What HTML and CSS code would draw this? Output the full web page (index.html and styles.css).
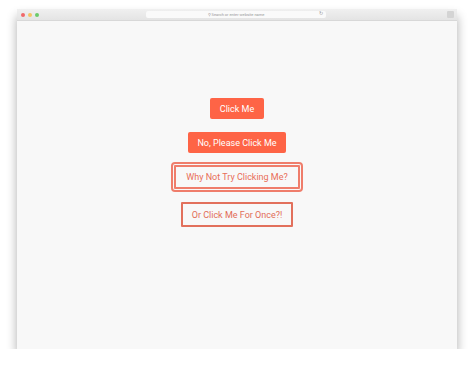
FILE: index.html
```html
<!DOCTYPE html>
<html lang="en">
<head>
  <meta charset="UTF-8" />
  <meta name="viewport" content="width=device-width, initial-scale=1.0" />
  <title>Button Styles</title>
  <link rel="stylesheet" href="styles.css">
</head>
<body>
  <div class="window">
    <!-- Browser chrome -->
    <div class="toolbar">
      <div class="lights">
        <span class="light red"></span>
        <span class="light yellow"></span>
        <span class="light green"></span>
      </div>
      <div class="address">
        <span class="search">&#9906; Search or enter website name</span>
        <span class="reload">&#8635;</span>
      </div>
      <div class="tab-btn"></div>
    </div>

    <div class="content">
      <button class="btn btn-solid">Click Me</button>
      <button class="btn btn-solid">No, Please Click Me</button>
      <button class="btn btn-double">Why Not Try Clicking Me?</button>
      <button class="btn btn-outline">Or Click Me For Once?!</button>
    </div>
  </div>
</body>
</html>
```

FILE: styles.css
```css
:root {
  --accent-color: #fe6446;
}

body {
  margin: 0;
  padding: 0;
  background-color: #fff;
  font-family: 'Roboto', sans-serif;
}

.window {
  width: 440px;
  margin: 9px 0 0 17px;
  box-shadow: 0 7px 10px rgba(0, 0, 0, 0.32);
}

.toolbar {
  height: 11px;
  background: linear-gradient(#f0f0f0, #e4e4e4);
  border-bottom: 1px solid #d8d8d8;
  display: flex;
  align-items: center;
  position: relative;
}

.lights {
  display: flex;
  gap: 3px;
  margin-left: 4px;
}

.light {
  width: 4px;
  height: 4px;
  border-radius: 50%;
}

.red { background: #f0686a; }
.yellow { background: #f5c563; }
.green { background: #6ccb6b; }

.address {
  width: 180px;
  height: 7px;
  margin-left: 107px;
  background: #fafafa;
  border-radius: 2px;
  display: flex;
  align-items: center;
  justify-content: center;
  position: relative;
}

.search {
  font-size: 4px;
  color: #999;
}

.reload {
  position: absolute;
  right: 3px;
  top: -1px;
  font-size: 5px;
  color: #999;
}

.tab-btn {
  width: 7px;
  height: 7px;
  margin-left: auto;
  margin-right: 3px;
  background: #d4d4d4;
  border-radius: 1px;
}

.content {
  height: 251px;
  padding-top: 77px;
  background-color: #f8f8f8;
  display: flex;
  flex-direction: column;
  align-items: center;
}

.btn {
  font-family: 'Roboto', sans-serif;
  font-size: 9px;
  cursor: pointer;
  box-sizing: border-box;
}

.btn-solid {
  height: 21px;
  padding: 0 9.5px;
  background: var(--accent-color);
  color: #fff;
  border: none;
  border-radius: 2px;
  margin-bottom: 13px;
}

.btn-double {
  height: 30px;
  padding: 0 10px;
  margin-top: -4px;
  background: transparent;
  color: #e86e58;
  border: 5px double #ef7d6b;
  border-radius: 4px;
  margin-bottom: 10px;
}

.btn-outline {
  height: 25px;
  padding: 0 9px;
  background: transparent;
  color: #e26c57;
  border: 2px solid #e2705c;
  border-radius: 1px;
}
```
